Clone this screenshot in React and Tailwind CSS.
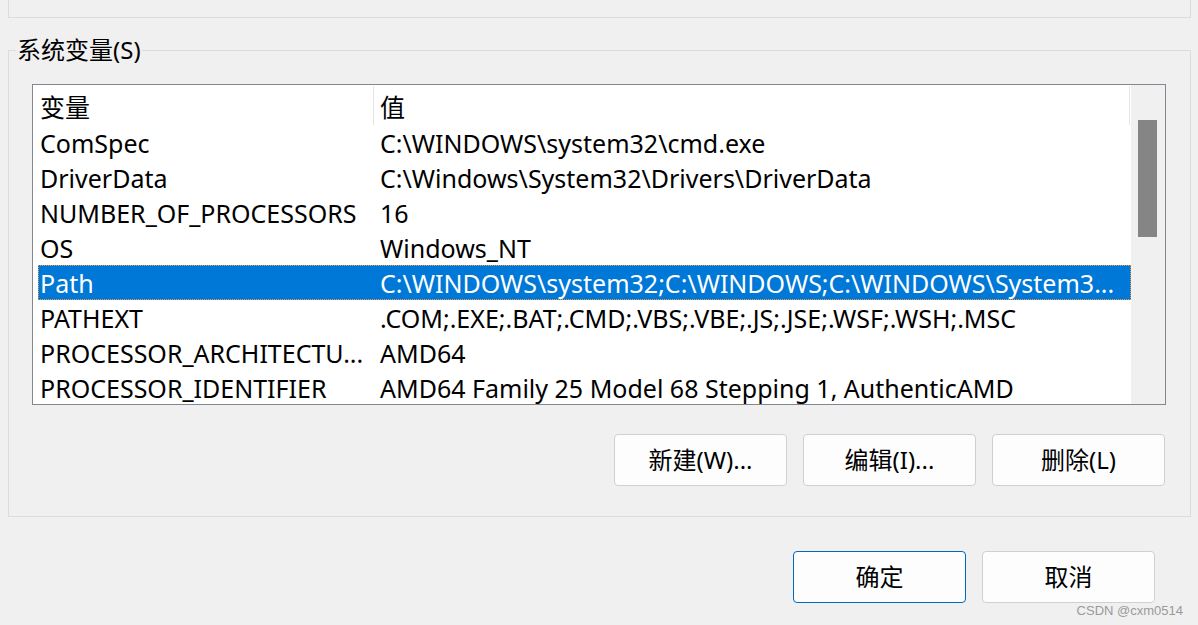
import React from "react";

const rows = [
  ["ComSpec", "C:\\WINDOWS\\system32\\cmd.exe"],
  ["DriverData", "C:\\Windows\\System32\\Drivers\\DriverData"],
  ["NUMBER_OF_PROCESSORS", "16"],
  ["OS", "Windows_NT"],
  ["Path", "C:\\WINDOWS\\system32;C:\\WINDOWS;C:\\WINDOWS\\System3..."],
  ["PATHEXT", ".COM;.EXE;.BAT;.CMD;.VBS;.VBE;.JS;.JSE;.WSF;.WSH;.MSC"],
  ["PROCESSOR_ARCHITECTU...", "AMD64"],
  ["PROCESSOR_IDENTIFIER", "AMD64 Family 25 Model 68 Stepping 1, AuthenticAMD"],
];

function Btn({ children, primary }) {
  return (
    <div
      className={
        "w-[173px] h-[52px] rounded-[4px] flex items-center justify-center bg-[#fdfdfd] text-[24px] leading-[30px] text-black " +
        (primary ? "border border-[#0067c0]" : "border border-[#d0d0d0]")
      }
    >
      {children}
    </div>
  );
}

export default function App() {
  return (
    <div
      className="w-[1198px] h-[625px] bg-[#f0f0f0] relative overflow-hidden pl-[8px] pr-[7px] text-black"
      style={{ fontFamily: '"Noto Sans", "Noto Sans CJK SC", sans-serif' }}
    >
      <div className="h-[18px] border-x border-b border-[#dcdcdc]" />

      <div className="mt-[32px] h-[467px] border border-[#dcdcdc]">
        <div className="-mt-[15px] ml-[7px] w-fit px-[1px] bg-[#f0f0f0] text-[24px] leading-[28px]">
          系统变量(S)
        </div>

        <div className="mt-[20px] mx-[23px] mr-[24px] h-[321px] border border-[#828790] bg-white flex overflow-hidden">
          <div className="flex-1 flex flex-col text-[25px] leading-[34px]">
            <div className="h-[40px] flex shrink-0">
              <div className="w-[340px] pl-[7px] pt-[3px] flex items-center">变量</div>
              <div className="w-px mt-px h-[39px] bg-[#e5e5e5]" />
              <div className="flex-1 pl-[6px] pt-[3px] flex items-center">值</div>
              <div className="w-px mt-px h-[39px] bg-[#e5e5e5]" />
              <div className="w-px" />
            </div>
            {rows.map(([k, v]) => {
              const sel = k === "Path";
              return (
                <div
                  key={k}
                  className={
                    "ml-[5px] h-[35px] shrink-0 flex items-center whitespace-nowrap overflow-hidden " +
                    (sel
                      ? "bg-[#0078d7] text-white border border-dotted border-[#f39a3d]"
                      : "border border-transparent")
                  }
                >
                  <div className="w-[335px] pl-[1px]">{k}</div>
                  <div className="flex-1 pl-[6px]">{v}</div>
                </div>
              );
            })}
          </div>
          <div className="w-[34px] bg-[#f0f0f0] shrink-0">
            <div className="mt-[35px] ml-[7px] w-[19px] h-[117px] bg-[#858585]" />
          </div>
        </div>

        <div className="mt-[29px] ml-[23px] mr-[24px] flex justify-end gap-[16px] pr-[1px]">
          <Btn>新建(W)...</Btn>
          <Btn>编辑(I)...</Btn>
          <Btn>删除(L)</Btn>
        </div>
      </div>

      <div className="mt-[34px] flex justify-end gap-[16px] pr-[36px]">
        <Btn primary>确定</Btn>
        <Btn>取消</Btn>
      </div>

      <div
        className="absolute right-[15px] bottom-[5px] text-[13px] leading-[18px] text-[#9a9a9a]"
        style={{ fontFamily: '"Liberation Sans", Arial, sans-serif' }}
      >
        CSDN @cxm0514
      </div>
    </div>
  );
}
